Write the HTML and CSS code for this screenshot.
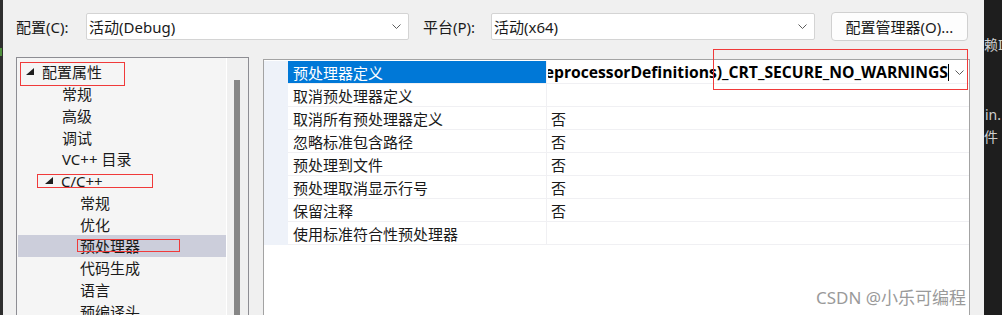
FILE: index.html
```html
<!DOCTYPE html>
<html lang="zh-CN">
<head>
    <meta charset="UTF-8">
    <title>预处理器 属性页</title>
    <link rel="stylesheet" href="styles.css">
</head>
<body>
    <div class="screen">
        <div class="edge-left"><span class="edge-mark"></span></div>

        <div class="dialog">
            <div class="toolbar">
                <span class="lbl lbl-config">配置(C):</span>
                <div class="combo combo-config">
                    <span>活动(Debug)</span>
                    <svg class="chev" width="9" height="5" viewBox="0 0 9 5"><polyline points="0.5,0.5 4.5,4.5 8.5,0.5"/></svg>
                </div>
                <span class="lbl lbl-platform">平台(P):</span>
                <div class="combo combo-platform">
                    <span>活动(x64)</span>
                    <svg class="chev" width="9" height="5" viewBox="0 0 9 5"><polyline points="0.5,0.5 4.5,4.5 8.5,0.5"/></svg>
                </div>
                <button class="btn">配置管理器(O)...</button>
            </div>

            <div class="panes">
                <div class="tree">
                    <ul class="tree-list">
                        <li class="node lvl0"><svg class="tri" width="8" height="7" viewBox="0 0 8 7"><polygon points="8,0 8,7 0,7"/></svg>配置属性</li>
                        <li class="node lvl1">常规</li>
                        <li class="node lvl1">高级</li>
                        <li class="node lvl1">调试</li>
                        <li class="node lvl1">VC++ 目录</li>
                        <li class="node lvl1b"><svg class="tri" width="8" height="7" viewBox="0 0 8 7"><polygon points="8,0 8,7 0,7"/></svg>C/C++</li>
                        <li class="node lvl2">常规</li>
                        <li class="node lvl2">优化</li>
                        <li class="node lvl2 selected">预处理器</li>
                        <li class="node lvl2">代码生成</li>
                        <li class="node lvl2">语言</li>
                        <li class="node lvl2">预编译头</li>
                    </ul>
                    <div class="vscroll"><div class="thumb"></div></div>
                </div>

                <div class="grid">
                    <div class="row active">
                        <div class="gutter"></div>
                        <div class="name">预处理器定义</div>
                        <div class="value editor">
                            <div class="edit-text"><span>%(PreprocessorDefinitions)_CRT_SECURE_NO_WARNINGS</span></div>
                            <span class="caret"></span>
                            <div class="drop">
                                <svg class="chev" width="9" height="5" viewBox="0 0 9 5"><polyline points="0.5,0.5 4.5,4.5 8.5,0.5"/></svg>
                            </div>
                        </div>
                    </div>
                    <div class="row">
                        <div class="gutter"></div>
                        <div class="name">取消预处理器定义</div>
                        <div class="value"></div>
                    </div>
                    <div class="row">
                        <div class="gutter"></div>
                        <div class="name">取消所有预处理器定义</div>
                        <div class="value">否</div>
                    </div>
                    <div class="row">
                        <div class="gutter"></div>
                        <div class="name">忽略标准包含路径</div>
                        <div class="value">否</div>
                    </div>
                    <div class="row">
                        <div class="gutter"></div>
                        <div class="name">预处理到文件</div>
                        <div class="value">否</div>
                    </div>
                    <div class="row">
                        <div class="gutter"></div>
                        <div class="name">预处理取消显示行号</div>
                        <div class="value">否</div>
                    </div>
                    <div class="row">
                        <div class="gutter"></div>
                        <div class="name">保留注释</div>
                        <div class="value">否</div>
                    </div>
                    <div class="row">
                        <div class="gutter"></div>
                        <div class="name">使用标准符合性预处理器</div>
                        <div class="value"></div>
                    </div>
                </div>
            </div>
        </div>

        <div class="edge-right">
            <span class="peek peek-1">赖I</span>
            <span class="peek peek-2">in.</span>
            <span class="peek peek-3">件</span>
        </div>
    </div>

    <!-- 标注框 -->
    <div class="mark-box box-props"></div>
    <div class="mark-box box-cpp"></div>
    <div class="mark-box box-pre"></div>
    <div class="mark-box box-value"></div>

    <div class="watermark">CSDN @小乐可编程</div>
</body>
</html>
```

FILE: styles.css
```css
* {
    margin: 0;
    padding: 0;
    box-sizing: border-box;
}

body {
    width: 1002px;
    height: 315px;
    overflow: hidden;
    position: relative;
    background: #f0f0f0;
    font-family: "Noto Sans", "Noto Sans CJK SC", sans-serif;
    color: #1a1a1a;
}

.screen {
    display: flex;
    height: 315px;
}

/* 左右两侧露出的编辑器 */
.edge-left {
    width: 3px;
    background: #2e2e2e;
}

.edge-mark {
    display: block;
    width: 2px;
    height: 8px;
    margin-top: 48px;
    background: #4f8f3c;
}

.edge-right {
    width: 18px;
    background: #1e1e1e;
    color: #cfcfcf;
    font-size: 14px;
    line-height: 18px;
    display: flex;
    flex-direction: column;
    overflow: hidden;
    white-space: nowrap;
}

.peek-1 { margin-top: 36px; }
.peek-2 { margin-top: 52px; margin-left: 1px; }
.peek-3 { margin-top: 4px; }

.dialog {
    flex: 1;
    padding: 12px 14px 0 13px;
}

/* 顶部配置栏 */
.toolbar {
    display: flex;
    align-items: center;
    height: 29px;
    font-size: 15px;
}

.lbl {
    white-space: nowrap;
}

.lbl-config { width: 70px; }

.lbl-platform {
    width: 68px;
    margin-left: 14px;
}

.combo {
    height: 27px;
    background: #fff;
    border: 1px solid #d4d4d4;
    border-radius: 2px;
    display: flex;
    align-items: center;
    justify-content: space-between;
    padding: 0 7px 0 2px;
}

.combo-config { width: 323px; }
.combo-platform { width: 324px; }

.chev {
    fill: none;
    stroke: #5c5c5c;
    stroke-width: 1;
}

.btn {
    width: 137px;
    height: 29px;
    margin-left: 16px;
    background: #fdfdfd;
    border: 1px solid #d0d0d0;
    border-radius: 4px;
    font-family: inherit;
    font-size: 15px;
    color: #1a1a1a;
}

/* 下方两栏 */
.panes {
    display: flex;
    align-items: flex-start;
    gap: 14px;
    margin-top: 16px;
}

.tree {
    width: 233px;
    height: 270px;
    border: 1px solid #8d8d93;
    border-bottom: none;
    display: flex;
}

.tree-list {
    list-style: none;
    width: 210px;
    background: #f5f5f5;
    border-right: 1px solid #fff;
    padding-top: 3px;
    font-size: 15px;
}

.node {
    height: 21.75px;
    display: flex;
    align-items: center;
    white-space: nowrap;
    margin-left: 1px;
}

.tri {
    fill: #1e1e1e;
    margin-right: 8px;
}

.lvl0 { padding-left: 8px; }
.lvl1 { padding-left: 44px; }
.lvl1b { padding-left: 27px; }
.lvl2 { padding-left: 62px; }

.node.selected {
    background: #cccedb;
}

.vscroll {
    width: 21px;
    background: #f0f0f0;
    padding: 22px 0 0 7px;
}

.thumb {
    width: 6px;
    height: 240px;
    background: #868686;
}

.grid {
    width: 707px;
    height: 260px;
    margin-top: 2px;
    background: #fff;
    border: 1px solid #a3a3a3;
    border-bottom: none;
    padding-top: 1px;
    font-size: 15px;
}

.row {
    display: grid;
    grid-template-columns: 24px 259px 1fr;
    height: 23px;
}

.gutter {
    background: #eef2f9;
}

.name,
.value {
    display: flex;
    align-items: center;
    border-bottom: 1px solid #f0f0f3;
    white-space: nowrap;
    min-width: 0;
}

.name {
    padding-left: 5px;
    border-right: 1px solid #f0f0f3;
}

.value {
    padding-left: 4px;
}

.row.active .name {
    background: #0078d7;
    color: #fff;
}

.value.editor {
    padding-left: 1px;
}

.edit-text {
    flex: 1;
    min-width: 0;
    overflow: hidden;
    display: flex;
    justify-content: flex-end;
    font-family: "Open Sans", "Noto Sans", sans-serif;
    font-weight: 700;
    font-size: 15.7px;
    color: #000;
}

.edit-text span {
    flex-shrink: 0;
}

.caret {
    width: 1px;
    height: 17px;
    background: #000;
}

.drop {
    width: 20px;
    height: 22px;
    display: flex;
    align-items: center;
    justify-content: center;
}

/* 红色标注框 */
.mark-box {
    position: absolute;
    border: 1px solid #f03a3a;
}

.box-props { left: 20px; top: 62px; width: 105px; height: 24px; }
.box-cpp { left: 37px; top: 174px; width: 116px; height: 14px; }
.box-pre { left: 77px; top: 239px; width: 103px; height: 13px; }
.box-value { left: 713px; top: 49px; width: 255px; height: 41px; }

.watermark {
    position: absolute;
    left: 816px;
    top: 284px;
    font-size: 17px;
    color: #9a9a9a;
    text-shadow: 1px 1px 0 #fff, -1px 0 0 rgba(255,255,255,0.6);
    white-space: nowrap;
}
```
